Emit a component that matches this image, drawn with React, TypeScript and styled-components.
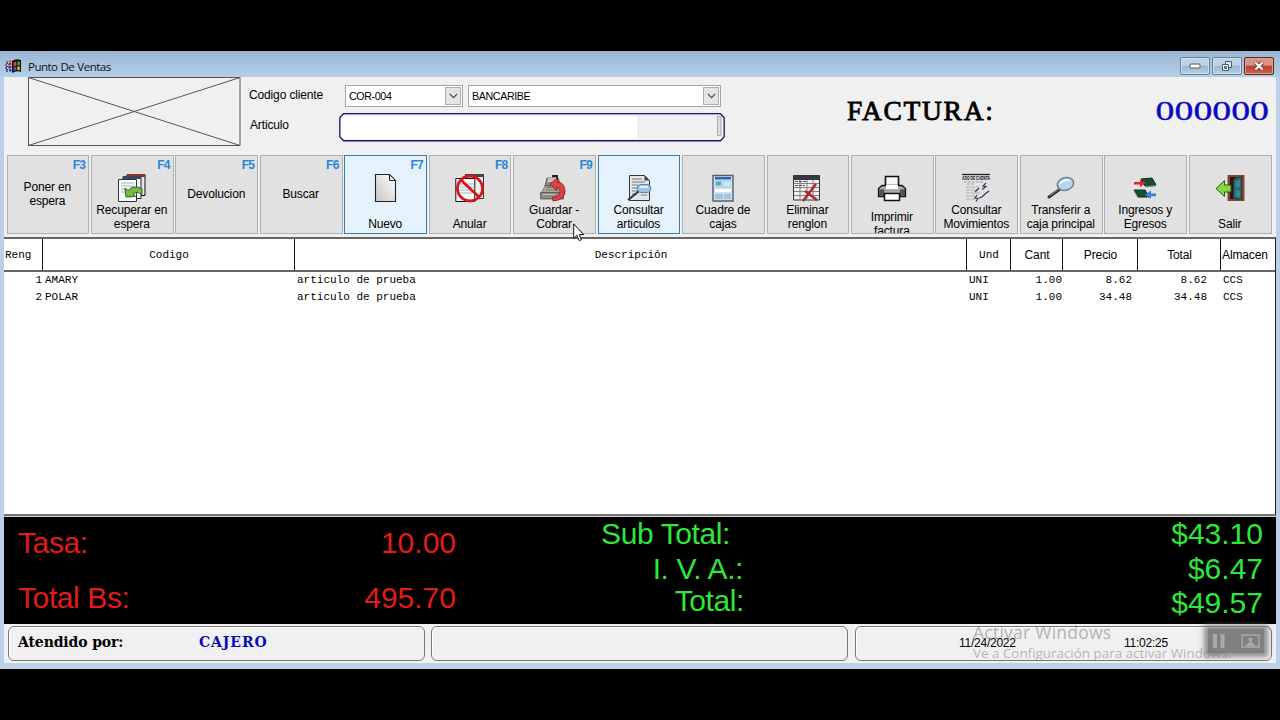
import React from "react";
import styled, { createGlobalStyle } from "styled-components";

const Global = createGlobalStyle`
  * { box-sizing: border-box; }
  body { margin: 0; background: #000; font-family: "Liberation Sans", Arial, sans-serif; }
`;

const Screen = styled.div`
  position: relative;
  width: 1280px;
  height: 720px;
  padding: 51px 0;
  background: #000;
  overflow: hidden;
`;

const Window = styled.div`
  height: 618px;
  display: flex;
  flex-direction: column;
  background: #bbd0e8;
`;

const TitleBar = styled.div`
  height: 26px;
  flex: none;
  display: flex;
  align-items: center;
  gap: 6px;
  padding: 4px 6px 0 5px;
  background: linear-gradient(#9ab6d3, #b4cfe7);
`;

const TitleText = styled.span`
  flex: 1;
  font: 11.5px "Open Sans", "Noto Sans", sans-serif;
  letter-spacing: -0.5px;
  word-spacing: 0.5px;
  color: #111;
`;

const WindowButtons = styled.div`
  display: flex;
  gap: 2px;
`;

const WindowButton = styled.div<{ $close?: boolean }>`
  width: 30px;
  height: 18px;
  display: flex;
  align-items: center;
  justify-content: center;
  border: 1px solid ${(p) => (p.$close ? "#5c2326" : "#69819c")};
  border-radius: 2px;
  box-shadow: inset 0 0 0 1px ${(p) => (p.$close ? "#e0a096" : "#cfdfef")};
  background: ${(p) =>
    p.$close
      ? "linear-gradient(#d99485 0 45%, #b8432f 50%, #c9604b)"
      : "linear-gradient(#bfd3e8 0 45%, #9db8d3 50%, #b3cce4)"};
`;

const Client = styled.div`
  flex: none;
  height: 586px;
  margin: 0 4px;
  display: flex;
  flex-direction: column;
  background: #f0f0f0;
`;

const Header = styled.div`
  height: 78px;
  flex: none;
  display: flex;
  align-items: flex-start;
  padding-left: 24px;
`;

const LogoBox = styled.svg`
  display: block;
  flex: none;
  width: 213px;
  height: 69px;
`;

const Form = styled.div`
  width: 480px;
  margin-left: 8px;
  padding-top: 8px;
`;

const FormRow = styled.div<{ $h: number }>`
  height: ${(p) => p.$h}px;
  display: flex;
  align-items: flex-start;
`;

const FieldLabel = styled.label<{ $w: number; $top: number; $indent?: number }>`
  width: ${(p) => p.$w}px;
  flex: none;
  padding: ${(p) => p.$top}px 0 0 ${(p) => p.$indent || 0}px;
  font-size: 12px;
  line-height: 14px;
  letter-spacing: -0.14px;
  color: #000;
`;

const Combo = styled.div<{ $w: number }>`
  width: ${(p) => p.$w}px;
  height: 22px;
  flex: none;
  display: flex;
  align-items: center;
  margin-right: 5px;
  padding: 0 1px 0 3px;
  border: 1px solid #a5a5a5;
  background: #fff;
  font-size: 10.7px;
  letter-spacing: -0.38px;
`;

const ComboText = styled.span`
  flex: 1;
`;

const ComboArrow = styled.span`
  width: 16px;
  height: 18px;
  display: flex;
  align-items: center;
  justify-content: center;
  background: #e4e4e4;
  border: 1px solid #adadad;
`;

const ArticleShape = styled.svg`
  display: block;
  width: 386px;
  height: 29px;
`;

const Invoice = styled.div`
  flex: 1;
  display: flex;
  justify-content: space-between;
  padding: 17px 7px 0 118px;
  line-height: 34px;
`;

const InvoiceTitle = styled.span`
  font-family: "Liberation Serif", serif;
  font-size: 27.5px;
  letter-spacing: 1.7px;
  -webkit-text-stroke: 0.8px #000;
`;

const InvoiceNumber = styled.span`
  font-family: "Liberation Serif", serif;
  font-size: 27px;
  color: #0b08c0;
  -webkit-text-stroke: 0.3px #0b08c0;
  transform: scaleX(1.4);
  transform-origin: right;
`;

const Toolbar = styled.div`
  height: 82px;
  flex: none;
  display: grid;
  grid-template-columns: repeat(15, 1fr);
  column-gap: 1.8px;
  padding: 0 4.5px 3px 2.5px;
`;

const ToolButton = styled.button<{ $active?: boolean; $plain?: boolean; $drop?: boolean }>`
  position: relative;
  min-width: 0;
  height: 79px;
  margin: 0;
  display: flex;
  flex-direction: column;
  align-items: center;
  justify-content: ${(p) => (p.$plain ? "center" : "flex-start")};
  padding: ${(p) => (p.$plain ? "0 1px 2px 0" : p.$drop ? "18px 1px 0 0" : "17px 1px 0 0")};
  overflow: hidden;
  border: 1px solid ${(p) => (p.$active ? "#2f7fa8" : "#b0b0b0")};
  background: ${(p) => (p.$active ? "#e5f1fb" : "#e1e1e1")};
  font-family: "Liberation Sans", Arial, sans-serif;
  color: #000;
`;

const ToolLabel = styled.span<{ $drop?: boolean }>`
  font-size: 12px;
  line-height: 14px;
  letter-spacing: -0.14px;
  white-space: pre;
  text-align: center;
  margin-top: ${(p) => (p.$drop ? 6 : 0)}px;
`;

const LabelArea = styled.span`
  height: 28px;
  display: flex;
  align-items: flex-end;
`;

const Hotkey = styled.span`
  position: absolute;
  top: 2px;
  right: 3px;
  font: bold 12px/14px "Liberation Sans", Arial, sans-serif;
  letter-spacing: -0.8px;
  color: #2a86d8;
`;

const Glyph = styled.svg`
  display: block;
  flex: none;
  width: 30px;
  height: 30px;
`;

const Table = styled.div`
  height: 279px;
  flex: none;
  border-top: 2px solid #666;
  border-right: 1px solid #222;
  border-bottom: 2px solid #777;
  background: #fff;
  font-family: "Liberation Mono", monospace;
  font-size: 11px;
`;

const columns = "39px 252px 672px 44px 52px 75px 83px 1fr";

const HeadRow = styled.div`
  height: 33px;
  display: grid;
  grid-template-columns: ${columns};
  border-bottom: 2px solid #666;
`;

const HeadCell = styled.div<{ $sans?: boolean }>`
  display: flex;
  align-items: center;
  justify-content: center;
  padding-top: ${(p) => (p.$sans ? "0" : "1px")};
  padding-left: 1px;
  border-right: 1px solid #111;
  white-space: nowrap;
  font-family: ${(p) => (p.$sans ? '"Liberation Sans", Arial, sans-serif' : "inherit")};
  font-size: ${(p) => (p.$sans ? "12px" : "11px")};
  letter-spacing: ${(p) => (p.$sans ? "-0.12px" : "0")};
  &:first-child { justify-content: flex-start; }
  &:last-child { border-right: 0; justify-content: flex-start; padding-left: 1px; }
`;

const BodyRow = styled.div`
  height: 17px;
  display: grid;
  grid-template-columns: ${columns};
  line-height: 17px;
`;

const BodyCell = styled.div<{ $right?: number }>`
  text-align: ${(p) => (p.$right === undefined ? "left" : "right")};
  padding: 0 ${(p) => p.$right ?? 2}px 0 ${(p) => (p.$right === undefined ? 2 : 0)}px;
  white-space: nowrap;
`;

const Totals = styled.div`
  height: 108px;
  flex: none;
  display: flex;
  border-top: 1px solid #ccc;
  background: #000;
  font-size: 30px;
  line-height: 34px;
`;

const RatePanel = styled.div`
  width: 452px;
  padding: 9px 0 0 14px;
  color: #e01b1b;
`;

const RateRow = styled.div`
  height: 55px;
  display: flex;
  justify-content: space-between;
`;

const RateLabel = styled.span`
  letter-spacing: -0.4px;
`;

const SumPanel = styled.div`
  flex: 1;
  display: flex;
  justify-content: space-between;
  padding-right: 13px;
  color: #2fe63a;
`;

const SumLabels = styled.div`
  width: 288px;
  display: flex;
  flex-direction: column;
  align-items: flex-end;
  letter-spacing: -0.4px;
`;

const SumLabel = styled.span<{ $h: number; $inset?: number }>`
  height: ${(p) => p.$h}px;
  margin-right: ${(p) => p.$inset || 0}px;
  white-space: pre;
`;

const SumValues = styled.div`
  display: flex;
  flex-direction: column;
  align-items: flex-end;
`;

const StatusBar = styled.div`
  flex: 1;
  display: grid;
  grid-template-columns: 417px 417px 417px;
  column-gap: 6.5px;
  padding: 2px 3.500px 2px 3.500px;
`;

const Panel = styled.div`
  position: relative;
  height: 35px;
  border: 1px solid #777;
  border-radius: 6px;
  box-shadow: inset 1px 1px 0 #fff;
`;

const AttendedPanel = styled(Panel)`
  display: flex;
  padding: 5px 0 0 9.500px;
  font: bold 14px/20px "DejaVu Serif", serif;
`;

const Attended = styled.span`
  width: 181px;
  letter-spacing: -0.12px;
`;

const Cashier = styled.span`
  letter-spacing: 0.9px;
  color: #0a0ab4;
`;

const ClockPanel = styled(Panel)`
  display: flex;
  align-items: center;
  padding: 0 0 2px 103.500px;
  font-size: 12px;
  letter-spacing: -0.25px;
`;

const DateText = styled.span`
  width: 165px;
`;

const Watermark = styled.div`
  position: absolute;
  left: 973px;
  top: 620px;
  font-family: "Open Sans", "Noto Sans", sans-serif;
  color: rgba(120, 120, 120, 0.52);
  white-space: nowrap;
`;

const WatermarkTitle = styled.div`
  font-size: 17.5px;
  line-height: 24px;
  letter-spacing: 0.25px;
`;

const WatermarkText = styled.div`
  font-size: 13.3px;
  line-height: 18px;
  letter-spacing: 0.05px;
`;

const Recorder = styled.div`
  position: absolute;
  left: 1208px;
  top: 629px;
  width: 56px;
  height: 24px;
  display: flex;
  align-items: center;
  justify-content: center;
  gap: 15px;
  background: rgba(112, 112, 112, 0.88);
  box-shadow: 0 0 5px 4px rgba(112, 112, 112, 0.75);
`;

const Cursor = styled.svg`
  position: absolute;
  left: 573px;
  top: 223px;
`;

const WindowsLogo = () => (
  <svg width="17" height="15" viewBox="0 0 17 15">
    <path d="M7 2q4-3 9-1v12q-4-2-9 1z" fill="#111" />
    <path d="M8.5 3.4q1.500-1 2.800-1v4l-2.800 1z" fill="#e0402c" />
    <path d="M12.400 2.200l2.400.4v4l-2.400-.4z" fill="#36a852" />
    <path d="M8.500 8.400l2.800-.9v3.600l-2.800 1z" fill="#3b5fd8" />
    <path d="M12.400 7.300l2.400.4v3.500l-2.400-.3z" fill="#e8c52c" />
    <path d="M1 3h2m1-.6h2.500M0 6h2m1-.6h3.500" stroke="#c03050" strokeWidth="1.500" />
    <path d="M0 9h2m1-.6h3.500M1 12h2m1-.4h2.500" stroke="#3a3ab8" strokeWidth="1.600" />
    <path d="M1 4.500h5.500M1 7.500h5.500M1 10.500h5.500" stroke="#222" strokeWidth=".8" strokeDasharray="2 1" />
  </svg>
);

const Chevron = () => (
  <svg width="9" height="6" viewBox="0 0 9 6">
    <path d="M.8.900l3.700 3.800L8.200.9" fill="none" stroke="#444" strokeWidth="1.100" />
  </svg>
);

const Recover = () => (
  <Glyph viewBox="0 0 30 30">
    <path d="M10 1.500h18v21H10z" fill="#e8e8e8" stroke="#111" />
    <path d="M10 1h18v3H10z" fill="#8c3038" />
    <path d="M6 3.500h18v22H6z" fill="#f5f5f5" stroke="#222" />
    <path d="M6 3h18v3H6z" fill="#334a66" />
    <path d="M1.500 6.500h18v22h-18z" fill="#f8f9fa" stroke="#333" />
    <path d="M4 10h13M4 13h13M4 16h6M4 19h4" stroke="#9db4cc" />
    <path d="M9 24l-1-9 3 2.500q5-6 14-2v6q-5-4-9-.5l2.500 2.500z" fill="#78b844" stroke="#2d641c" />
  </Glyph>
);

const NewDoc = () => (
  <Glyph viewBox="0 0 30 30">
    <defs>
      <linearGradient id="doc" x1="0" y1="1" x2="1" y2="0">
        <stop offset="0" stopColor="#c4c4c4" />
        <stop offset="1" stopColor="#fff" />
      </linearGradient>
    </defs>
    <path d="M5.500 1.500h14l6 6v21h-20z" fill="url(#doc)" stroke="#222" strokeWidth="1.100" />
    <path d="M19.500 1.500v6h6z" fill="#eee" stroke="#222" />
  </Glyph>
);

const Cancel = () => (
  <Glyph viewBox="0 0 30 30">
    <path d="M10.500 1.500h18v24h-18z" fill="#eee" stroke="#333" />
    <path d="M10 1h19v3H10z" fill="#444" />
    <path d="M.8 5.500h19v23h-19z" fill="#f8f8f8" stroke="#111" />
    <path d="M5 11h14M5 14h14M5 17h12M5 20h12" stroke="#a8b4c4" />
    <circle cx="15" cy="15.500" r="12.500" fill="none" stroke="#d31820" strokeWidth="2.800" />
    <path d="M6 7l18 17" stroke="#d31820" strokeWidth="2.800" />
  </Glyph>
);

const Register = () => (
  <Glyph viewBox="0 0 30 30">
    <path d="M8 5h11l3 8H6z" fill="#8b8980" stroke="#444" strokeWidth=".8" />
    <path d="M13 2h6v5h-6z" fill="#222" />
    <path d="M9 5l8-1v5H8z" fill="#c3c1b8" />
    <path d="M6 13h16l4 8H2z" fill="#aaa89e" stroke="#555" strokeWidth=".7" />
    <path d="M8 14.500h9M7 17h10" stroke="#6c6a60" strokeWidth=".8" />
    <path d="M1.500 19.500h23V26h-23z" fill="#8d8a80" stroke="#444" strokeWidth=".7" />
    <path d="M4 21.500h12" stroke="#c2c0b6" />
    <path d="M11 11l7.500-6v4q7.500 1 7.500 9 0 9-12 10l-1-3.500q8-.5 8-6 0-3.500-3-4.200V18z" fill="#dc4444" stroke="#8d1d1d" strokeWidth=".8" />
  </Glyph>
);

const SearchDoc = () => (
  <Glyph viewBox="0 0 30 30">
    <path d="M5.500 2.500h15l5 5v20h-20z" fill="#e3e6e9" stroke="#333" />
    <path d="M20.500 2.500v5h5z" fill="#444" />
    <path d="M8 6h10M8 9h13M8 12h6M8 15h5M8 18h5M8 21h5M17 22h6" stroke="#777" />
    <rect x="13" y="11.500" width="14" height="8" rx="4" fill="#9cc5e4" stroke="#66829c" />
    <path d="M16 14h8" stroke="#e1f2ff" strokeWidth="2" />
    <path d="M14.500 18.500L4 27" stroke="#303a44" strokeWidth="2.200" />
  </Glyph>
);

const CashReport = () => (
  <Glyph viewBox="0 0 30 30">
    <path d="M5 2.500h20v25.500H5z" fill="#cfe1ee" stroke="#4d6175" strokeWidth="1.400" />
    <path d="M7 4h16v2.500H7z" fill="#2d65b4" />
    <path d="M7 7.500h16V15H7z" fill="#b5d9e8" />
    <path d="M8 8.500h5v4H8z" fill="#5fa8b5" />
    <path d="M16 10h6M16 12h6" stroke="#dff" />
    <path d="M7 16h16v3H7z" fill="#fff" />
    <path d="M7 21h8v5H7zM16 21h7v5h-7z" fill="#a3c4d8" />
  </Glyph>
);

const DeleteRow = () => (
  <Glyph viewBox="0 0 30 30">
    <path d="M1.500 2.500h26V27h-26z" fill="#ededed" stroke="#333" />
    <path d="M1.500 2.500h26V7h-26z" fill="#323846" />
    <path d="M2 10.500h25M2 14.500h25M2 18.500h25M2 22.500h25M8 7v19M15 7v19M21 7v19" stroke="#777" strokeWidth=".9" />
    <path d="M3 8.500h11M3 12.500h10" stroke="#333" strokeDasharray="3 1" strokeWidth=".8" />
    <path d="M24 11L11 28M13 18l12 9" stroke="#b32430" strokeWidth="2.500" />
  </Glyph>
);

const Printer = () => (
  <Glyph viewBox="0 0 30 30">
    <path d="M8.500 2.500h13v11h-13z" fill="#f8f8f8" stroke="#111" strokeWidth="1.600" />
    <path d="M5 11.500h20l3.500 3v8h-27v-8z" fill="#a9a9a9" stroke="#111" strokeWidth="1.300" />
    <path d="M2.200 15.500h5v6h-5zM23 15.500h5v6h-5z" fill="#333" opacity=".75" />
    <path d="M9 11h12v4H9z" fill="#fff" />
    <path d="M7.500 19.500h15v7h-15z" fill="#fff" stroke="#111" strokeWidth="1.500" />
  </Glyph>
);

const StatementText = styled.text`
  font: bold 4.6px "Liberation Sans", Arial, sans-serif;
`;

const Statement = () => (
  <Glyph viewBox="0 0 30 30">
    <path d="M1 1.500h28" stroke="#222" strokeWidth="1.300" />
    <StatementText x="1" y="6.800" textLength="28" lengthAdjust="spacingAndGlyphs">ADO DE CUENTA</StatementText>
    <path d="M3 9h20M6 11h7" stroke="#999" strokeDasharray="3 1" strokeWidth=".8" />
    <path d="M5 14h13M5 17h12M5 20h14M5 23h9M5 26h10" stroke="#aaa" strokeDasharray="4 1" />
    <path d="M25 10l-3 3 3 .5-4 3M18 15l-4 4M28 18l-4 3-3 3-3 1M16 22l-2 3 3 .5-2 3" fill="none" stroke="#34345e" strokeWidth="1.200" />
  </Glyph>
);

const Magnifier = () => (
  <Glyph viewBox="0 0 30 30">
    <path d="M14 16L3 24" stroke="#333" strokeWidth="3" strokeLinecap="round" />
    <path d="M13 16L4 22.500" stroke="#aaa" strokeWidth=".8" />
    <ellipse cx="19.500" cy="11" rx="8.300" ry="6.200" transform="rotate(-16 19.500 11)" fill="#b3d6f2" stroke="#6d7d8d" strokeWidth="1.500" />
    <path d="M14 11q3-4.500 9-4" fill="none" stroke="#f4fbff" strokeWidth="2.300" />
  </Glyph>
);

const CashFlow = () => (
  <Glyph viewBox="0 0 30 30">
    <path d="M11 6l11-1 4 7-11 1z" fill="#174f2c" stroke="#0b2e19" />
    <path d="M15 13l11-1v1.500l-11 1z" fill="#7c8b7e" />
    <path d="M4 17h11l4 7H8z" fill="#174f2c" stroke="#0b2e19" />
    <path d="M4 17v2l4 6v-1z" fill="#8b9a8e" />
    <path d="M4 9h6V6.500l6 3.800-6 3.800V11.500H4z" fill="#dc2631" />
    <path d="M26 20.500h-5v-3l-6.500 4.200 6.500 4v-2.500h5z" fill="#377ddb" />
  </Glyph>
);

const Exit = () => (
  <Glyph viewBox="0 0 30 30">
    <path d="M12.500 2h17v26h-17z" fill="#7b4930" />
    <path d="M15 4h6v22h-6z" fill="#35120c" />
    <path d="M18.500 6l8-2.500v23l-8-1z" fill="#2d6b70" stroke="#173b3e" />
    <path d="M21 8l4-1v7l-4 .5zM21 17h4v7l-4-.5z" fill="#3c8588" />
    <path d="M1 15.500l8.500-8v4.500h6.500v7H9.500v4.500z" fill="#87d44b" stroke="#2a5a16" />
  </Glyph>
);

type Tool = {
  label: string;
  hotkey?: string;
  icon?: React.ComponentType;
  active?: boolean;
  drop?: boolean;
};

const tools: Tool[] = [
  { label: "Poner en\nespera", hotkey: "F3" },
  { label: "Recuperar en\nespera", hotkey: "F4", icon: Recover },
  { label: "Devolucion", hotkey: "F5" },
  { label: "Buscar", hotkey: "F6" },
  { label: "Nuevo", hotkey: "F7", icon: NewDoc, active: true },
  { label: "Anular", hotkey: "F8", icon: Cancel },
  { label: "Guardar -\nCobrar", hotkey: "F9", icon: Register },
  { label: "Consultar\narticulos", icon: SearchDoc, active: true },
  { label: "Cuadre de\ncajas", icon: CashReport },
  { label: "Eliminar\nrenglon", icon: DeleteRow },
  { label: "Imprimir\nfactura", icon: Printer, drop: true },
  { label: "Consultar\nMovimientos", icon: Statement },
  { label: "Transferir a\ncaja principal", icon: Magnifier },
  { label: "Ingresos y\nEgresos", icon: CashFlow },
  { label: "Salir", icon: Exit },
];

const heads = [
  { text: "Reng" },
  { text: "Codigo" },
  { text: "Descripción" },
  { text: "Und" },
  { text: "Cant", sans: true },
  { text: "Precio", sans: true },
  { text: "Total", sans: true },
  { text: "Almacen", sans: true },
];

const rows = [
  ["1", "AMARY", "articulo de prueba", "UNI", "1.00", "8.62", "8.62", "CCS"],
  ["2", "POLAR", "articulo de prueba", "UNI", "1.00", "34.48", "34.48", "CCS"],
];

/* Right padding of the numeric columns; the others are left-aligned. */
const rightPadding: Record<number, number> = { 0: 1, 4: 1, 5: 6, 6: 14 };

export default function App() {
  return (
    <Screen>
      <Global />
      <Window>
        <TitleBar>
          <WindowsLogo />
          <TitleText>Punto De Ventas</TitleText>
          <WindowButtons>
            <WindowButton>
              <svg width="12" height="6" viewBox="0 0 12 6">
                <rect x="1" y="1" width="10" height="4" rx="1" fill="#fff" stroke="#4b5866" />
              </svg>
            </WindowButton>
            <WindowButton>
              <svg width="12" height="12" viewBox="0 0 12 12">
                <path d="M4.500 1.500h6v6h-6z" fill="#e8eef5" stroke="#4b5866" />
                <path d="M1.500 4.500h6v6h-6z" fill="#fff" stroke="#4b5866" />
                <path d="M3.500 6.500h2v2h-2z" fill="#9db8d3" stroke="#4b5866" />
              </svg>
            </WindowButton>
            <WindowButton $close>
              <svg width="12" height="10" viewBox="0 0 12 10">
                <path d="M2.500 1.500l7 7m0-7l-7 7" stroke="#6b3430" strokeWidth="4" />
                <path d="M2.500 1.500l7 7m0-7l-7 7" stroke="#fff" strokeWidth="2.300" />
              </svg>
            </WindowButton>
          </WindowButtons>
        </TitleBar>
        <Client>
          <Header>
            <LogoBox viewBox="0 0 213 69">
              <path d="M.5.500h211.500v68H.5zL212 68.500M212 .5L.5 68.500" fill="none" stroke="#555" />
            </LogoBox>
            <Form>
              <FormRow $h={28}>
                <FieldLabel $w={96} $top={3}>Codigo cliente</FieldLabel>
                <Combo $w={118}>
                  <ComboText>COR-004</ComboText>
                  <ComboArrow><Chevron /></ComboArrow>
                </Combo>
                <Combo $w={253}>
                  <ComboText>BANCARIBE</ComboText>
                  <ComboArrow><Chevron /></ComboArrow>
                </Combo>
              </FormRow>
              <FormRow $h={30}>
                <FieldLabel $w={90} $top={5} $indent={1}>Articulo</FieldLabel>
                <ArticleShape viewBox="0 0 386 29">
                  <path d="M4.500.750h377l3.700 4v19l-3.700 4h-377l-3.700-4v-19z" fill="#f0f0f0" stroke="#1c1a66" strokeWidth="1.300" />
                  <path d="M4.500 2h293.500v23.500H4.500L2 23V5z" fill="#fff" />
                  <path d="M5 2h376" stroke="#dcd8fb" />
                  <path d="M378.500 3.500h3.500v19h-3.500z" fill="#ddd" stroke="#aaa" />
                </ArticleShape>
              </FormRow>
            </Form>
            <Invoice>
              <InvoiceTitle>FACTURA:</InvoiceTitle>
              <InvoiceNumber>000000</InvoiceNumber>
            </Invoice>
          </Header>
          <Toolbar>
            {tools.map(({ label, hotkey, icon: Icon, active, drop }) => (
              <ToolButton key={label} $active={active} $plain={!Icon} $drop={drop}>
                {hotkey && <Hotkey>{hotkey}</Hotkey>}
                {Icon ? (
                  <>
                    <Icon />
                    {drop ? (
                      <ToolLabel $drop>{label}</ToolLabel>
                    ) : (
                      <LabelArea><ToolLabel>{label}</ToolLabel></LabelArea>
                    )}
                  </>
                ) : (
                  <ToolLabel>{label}</ToolLabel>
                )}
              </ToolButton>
            ))}
          </Toolbar>
          <Table>
            <HeadRow>
              {heads.map((h) => (
                <HeadCell key={h.text} $sans={h.sans}>{h.text}</HeadCell>
              ))}
            </HeadRow>
            {rows.map((row) => (
              <BodyRow key={row[0]}>
                {row.map((cell, i) => (
                  <BodyCell key={i} $right={rightPadding[i]}>{cell}</BodyCell>
                ))}
              </BodyRow>
            ))}
          </Table>
          <Totals>
            <RatePanel>
              <RateRow><RateLabel>Tasa:</RateLabel><span>10.00</span></RateRow>
              <RateRow><RateLabel>Total Bs:</RateLabel><span>495.70</span></RateRow>
            </RatePanel>
            <SumPanel>
              <SumLabels>
                <SumLabel $h={35} $inset={14}>Sub Total:</SumLabel>
                <SumLabel $h={32} $inset={1}>I. V. A.:</SumLabel>
                <SumLabel $h={34}>Total:</SumLabel>
              </SumLabels>
              <SumValues>
                <SumLabel $h={35}>$43.10</SumLabel>
                <SumLabel $h={34}>$6.47</SumLabel>
                <SumLabel $h={34}>$49.57</SumLabel>
              </SumValues>
            </SumPanel>
          </Totals>
          <StatusBar>
            <AttendedPanel>
              <Attended>Atendido por:</Attended>
              <Cashier>CAJERO</Cashier>
            </AttendedPanel>
            <Panel />
            <ClockPanel>
              <DateText>11/24/2022</DateText>
              <span>11:02:25</span>
            </ClockPanel>
          </StatusBar>
        </Client>
      </Window>
      <Watermark>
        <WatermarkTitle>Activar Windows</WatermarkTitle>
        <WatermarkText>Ve a Configuración para activar Windows.</WatermarkText>
      </Watermark>
      <Recorder>
        <svg width="14" height="14" viewBox="0 0 14 14">
          <path d="M1 0h4v14H1zM8.500 0h4v14h-4z" fill="#a9a9a9" />
        </svg>
        <svg width="19" height="14" viewBox="0 0 19 14">
          <path d="M1 1h17v12H1z" fill="none" stroke="#a9a9a9" strokeWidth="1.300" />
          <circle cx="9.500" cy="5.500" r="2" fill="#a9a9a9" />
          <path d="M4 12l5.500-5 5.500 5z" fill="#a9a9a9" />
        </svg>
      </Recorder>
      <Cursor width="12" height="19" viewBox="0 0 12 19">
        <path d="M.7.900v14.500l3.200-3 2.300 5.200 2.300-1-2.300-5h4.500z" fill="#fff" stroke="#111" />
      </Cursor>
    </Screen>
  );
}
